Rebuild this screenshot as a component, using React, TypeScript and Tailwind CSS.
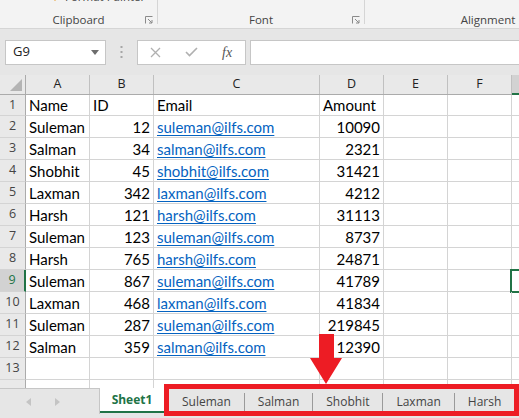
import React from 'react'

const ui = { fontFamily: '"Open Sans", "Noto Sans", sans-serif' }
const cellFont = { fontFamily: 'Lato, "Liberation Sans", sans-serif' }

const cols = 'grid grid-cols-[26px_64px_64px_166px_64px_64px_64px_1fr]'

type Row = [string, number | string, string, number | string]

const rows: Row[] = [
  ['Name', 'ID', 'Email', 'Amount'],
  ['Suleman', 12, 'suleman@ilfs.com', 10090],
  ['Salman', 34, 'salman@ilfs.com', 2321],
  ['Shobhit', 45, 'shobhit@ilfs.com', 31421],
  ['Laxman', 342, 'laxman@ilfs.com', 4212],
  ['Harsh', 121, 'harsh@ilfs.com', 31113],
  ['Suleman', 123, 'suleman@ilfs.com', 8737],
  ['Harsh', 765, 'harsh@ilfs.com', 24871],
  ['Suleman', 867, 'suleman@ilfs.com', 41789],
  ['Laxman', 468, 'laxman@ilfs.com', 41834],
  ['Suleman', 287, 'suleman@ilfs.com', 219845],
  ['Salman', 359, 'salman@ilfs.com', 12390],
]

const sheets = ['Suleman', 'Salman', 'Shobhit', 'Laxman', 'Harsh']

function Launcher() {
  return (
    <svg width="8" height="8" viewBox="0 0 8 8" className="mb-[4px]">
      <path d="M0.5 7.5V0.5H7.5" fill="none" stroke="#8a8a8a" strokeWidth="1" />
      <path d="M3 3L7 7M7 4V7H4" fill="none" stroke="#8a8a8a" strokeWidth="1" />
    </svg>
  )
}

function RibbonGroup({ label, width, launcher = true, children }: { label: string; width: string; launcher?: boolean; children?: React.ReactNode }) {
  return (
    <div className={`${width} h-full flex flex-col shrink-0`}>
      <div className="h-[12px] overflow-hidden">{children}</div>
      <div className="flex-1 grid grid-cols-[1fr_auto_1fr] items-end">
        <span />
        <span className="text-[11.5px] leading-[14px] pb-[1px] text-[#444]">{label}</span>
        <span className="justify-self-end pr-[4px]">{launcher && <Launcher />}</span>
      </div>
    </div>
  )
}

function Separator() {
  return <div className="w-px h-[24px] bg-[#d5d5d5] shrink-0" />
}

function Cell({ value, align, link, className = '' }: { value?: string | number; align?: 'left' | 'right'; link?: boolean; className?: string }) {
  return (
    <div
      className={`relative flex items-end pb-[1px] border-r border-b border-[#d4d4d4] overflow-visible whitespace-nowrap px-[3px] ${
        align === 'right' ? 'justify-end' : 'justify-start'
      } ${className}`}
    >
      {value !== undefined && (
        <span className={`text-[15px] leading-[18px] ${link ? 'text-[#0563c1] underline underline-offset-2' : 'text-black'}`}>{value}</span>
      )}
    </div>
  )
}

function RowHeader({ n, active }: { n: number; active?: boolean }) {
  return (
    <div
      className={`flex items-center justify-center text-[12.5px] border-b border-[#d4d4d4] ${
        active ? 'bg-[#d2d2d2] text-[#217346] border-r-2 border-r-[#217346]' : 'bg-[#e9e9e9] text-[#444] border-r border-r-[#ababab]'
      }`}
      style={ui}
    >
      {n}
    </div>
  )
}

export default function App() {
  return (
    <div className="relative w-[519px] h-[418px] overflow-hidden bg-white flex flex-col" style={ui}>
      {/* ribbon */}
      <div className="h-[29px] shrink-0 bg-[#f3f3f3] border-b border-[#d5d5d5] flex items-start">
        <RibbonGroup label="Clipboard" width="w-[157px]">
          <div className="flex items-center -mt-[11px] pl-[21px] gap-[25px] text-[11.5px] leading-[16px] text-[#444]">
            <span className="text-[9px] text-[#9a9a9a]">▾</span>
            <span className="flex items-center gap-[6px]">
              <svg width="8" height="10" viewBox="0 0 8 10">
                <path d="M1 0h6v6L4 9 1 6z" fill="#e8a33d" />
              </svg>
              Format Painter
            </span>
          </div>
        </RibbonGroup>
        <Separator />
        <RibbonGroup label="Font" width="w-[206px]" />
        <Separator />
        <RibbonGroup label="Alignment" width="w-[246px]" launcher={false} />
      </div>

      {/* formula band */}
      <div className="h-[46px] shrink-0 bg-[#e6e6e6] flex items-center pl-[5px]">
        <div className="w-[101px] h-[25px] bg-white border border-[#c6c6c6] flex items-center justify-between pl-[7px] pr-[6px]">
          <span className="text-[13px] text-[#222]">G9</span>
          <svg width="8" height="5" viewBox="0 0 8 5">
            <path d="M0 0h8L4 5z" fill="#6d6d6d" />
          </svg>
        </div>
        <div className="w-[31px] flex justify-center">
          <svg width="3" height="12" viewBox="0 0 3 12">
            <rect x="0.5" y="0" width="2" height="2" fill="#a6a6a6" />
            <rect x="0.5" y="5" width="2" height="2" fill="#a6a6a6" />
            <rect x="0.5" y="10" width="2" height="2" fill="#a6a6a6" />
          </svg>
        </div>
        <div className="w-[109px] h-[25px] bg-white border border-[#c6c6c6] grid grid-cols-3 items-center justify-items-center">
          <svg width="11" height="11" viewBox="0 0 11 11">
            <path d="M1 1L10 10M10 1L1 10" stroke="#b0b0b0" strokeWidth="1.3" />
          </svg>
          <svg width="13" height="10" viewBox="0 0 13 10">
            <path d="M1 5L4.5 8.5L12 1" fill="none" stroke="#b0b0b0" strokeWidth="1.6" />
          </svg>
          <span className="italic text-[14px] text-[#555]" style={{ fontFamily: '"Liberation Serif", serif' }}>
            fx
          </span>
        </div>
        <div className="ml-[4px] flex-1 h-[25px] bg-white border border-[#c6c6c6] border-r-0" />
      </div>

      {/* column headers */}
      <div className={`${cols} h-[20px] shrink-0 bg-[#e9e9e9] border-b border-[#ababab] text-[12.5px] text-[#222]`}>
        <div className="border-r border-[#ababab] flex items-end justify-end p-[3px]">
          <svg width="12" height="12" viewBox="0 0 12 12">
            <path d="M12 0V12H0z" fill="#b4b4b4" />
          </svg>
        </div>
        {['A', 'B', 'C', 'D', 'E', 'F'].map(c => (
          <div key={c} className="border-r border-[#c0c0c0] flex items-center justify-center">
            {c}
          </div>
        ))}
        <div className="bg-[#d2d2d2] border-b-2 border-[#217346] -mb-px" />
      </div>

      {/* rows */}
      <div className="flex-1 flex flex-col" style={cellFont}>
        {rows.map((r, i) => {
          const n = i + 1
          const header = i === 0
          return (
            <div key={n} className={`${cols} ${header ? 'h-[21px]' : 'h-[22px]'} shrink-0`}>
              <RowHeader n={n} active={n === 9} />
              <Cell value={r[0]} />
              <Cell value={r[1]} align={header ? 'left' : 'right'} />
              <Cell value={r[2]} link={!header} />
              <Cell value={r[3]} align={header ? 'left' : 'right'} />
              <Cell />
              <Cell />
              <div className="relative border-b border-[#d4d4d4]">
                {n === 9 && <div className="absolute -left-[2px] -top-[1px] w-[12px] h-[24px] border-2 border-[#217346]" />}
              </div>
            </div>
          )
        })}
        <div className={`${cols} h-[22px] shrink-0`}>
          <RowHeader n={13} />
          <Cell />
          <Cell />
          <Cell />
          <Cell />
          <Cell />
          <Cell />
          <div className="border-b border-[#d4d4d4]" />
        </div>
        <div className={`${cols} flex-1`}>
          <div className="bg-[#e9e9e9] border-r border-[#ababab]" />
          {[0, 1, 2, 3, 4, 5].map(k => (
            <div key={k} className="border-r border-[#d4d4d4]" />
          ))}
          <div />
        </div>
      </div>

      {/* sheet tabs */}
      <div className="h-[30px] shrink-0 bg-[#e6e6e6] border-t border-[#c6c6c6] flex items-start">
        <div className="w-[100px] h-[25px] flex items-center pl-[26px] gap-[24px] border-r border-[#c6c6c6]">
          <svg width="5" height="8" viewBox="0 0 5 8">
            <path d="M5 0V8L0 4z" fill="#c4c4c4" />
          </svg>
          <svg width="5" height="8" viewBox="0 0 5 8">
            <path d="M0 0V8L5 4z" fill="#c4c4c4" />
          </svg>
        </div>
        <div className="w-[64px] h-[25px] -mt-px bg-white border-b-2 border-[#217346] flex items-center justify-center text-[12px] font-bold text-[#217346]">
          Sheet1
        </div>
        <div className="flex items-center h-[25px] pl-[5px]">
          {sheets.map((s, i) => (
            <React.Fragment key={s}>
              {i > 0 && <div className="w-px h-[18px] bg-[#9a9a9a]" />}
              <div className="px-[13px] text-[12px] text-[#444] leading-[25px]">{s}</div>
            </React.Fragment>
          ))}
        </div>
      </div>

      {/* annotation overlay */}
      <div className="absolute left-[164px] top-[384px] w-[355px] h-[32px] border-[5px] border-[#ed1c24] pointer-events-none" />
      <svg className="absolute left-[309px] top-[334px]" width="34" height="51" viewBox="0 0 34 51">
        <path d="M10 0H25V24H33L17 50L1 24H10z" fill="#ed1c24" />
      </svg>
    </div>
  )
}
